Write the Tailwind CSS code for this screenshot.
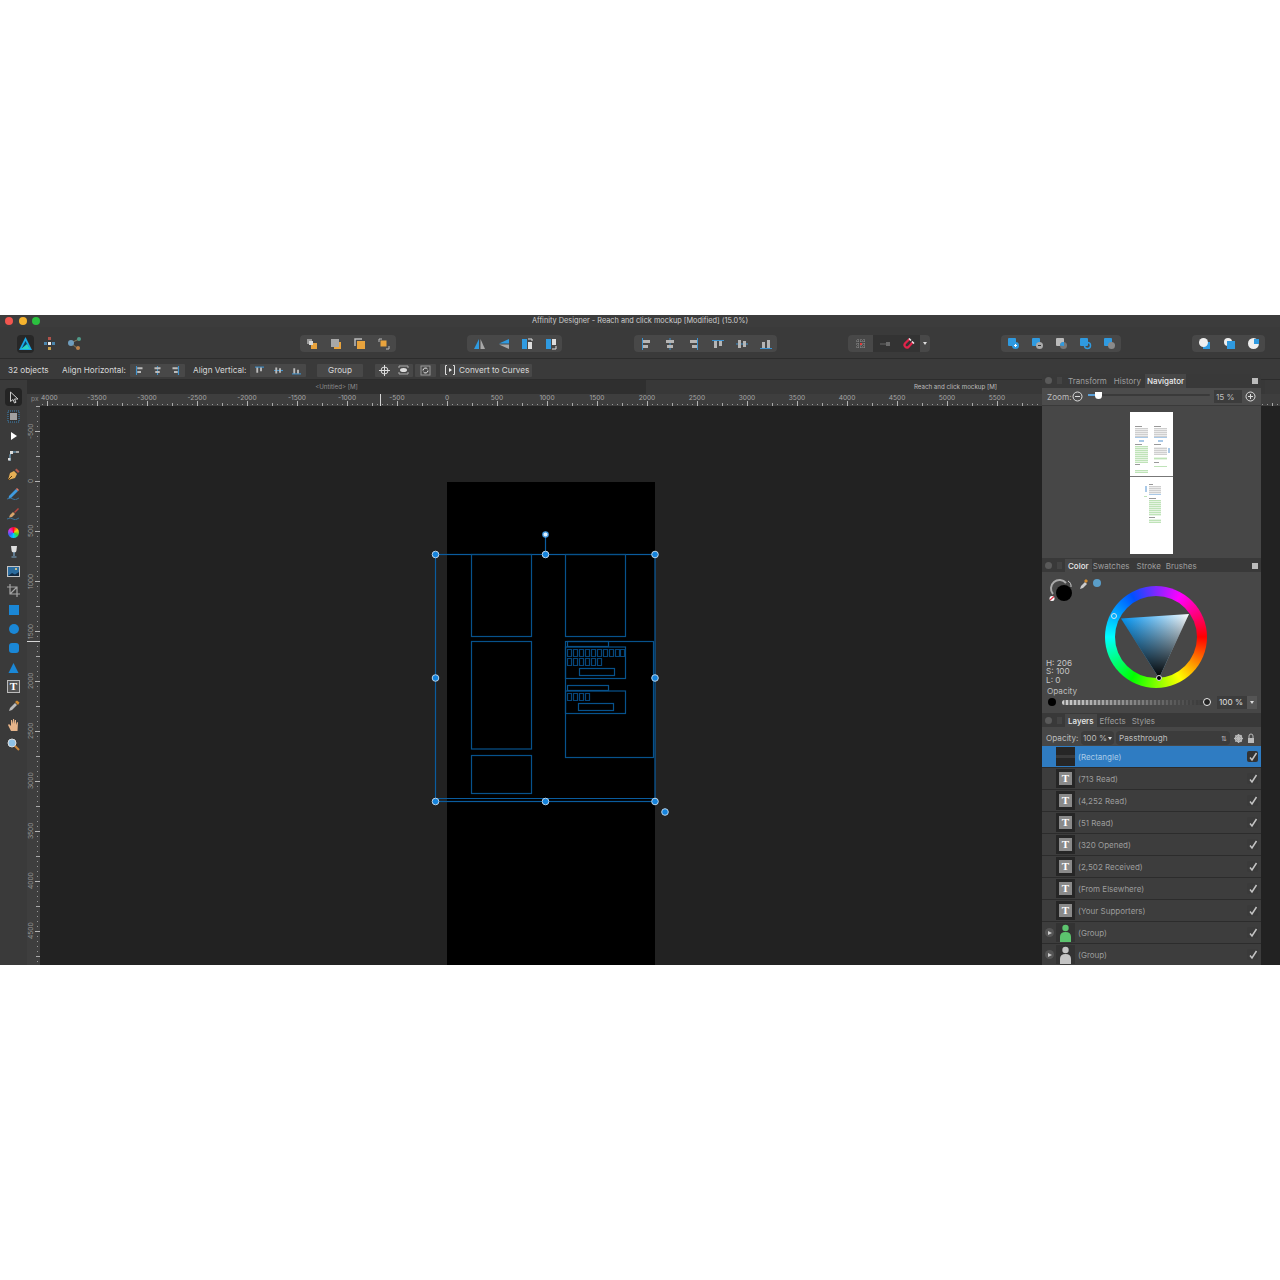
<!DOCTYPE html>
<html lang="en">
<head>
    <meta charset="UTF-8">
    <title>Affinity Designer</title>
    <script src="https://cdn.jsdelivr.net/npm/@tailwindcss/browser@4"></script>
</head>
<body class="bg-white font-['Inter',sans-serif]">
<div class="h-[315px]"></div>

<div class="relative h-[650px] overflow-hidden bg-[#3a3a3a] text-[8.200px] text-[#d8d8d8]">
    <!-- title bar -->
    <div class="relative h-[12px] pt-[1px] flex items-center justify-center bg-[#3c3c3c] text-[7.330px] text-[#cfcfcf]">
        <div class="absolute left-[5px] top-[2px] flex gap-[5.500px]">
            <span class="w-[8px] h-[8px] rounded-full bg-[#f2564f]"></span>
            <span class="w-[8px] h-[8px] rounded-full bg-[#f5b32e]"></span>
            <span class="w-[8px] h-[8px] rounded-full bg-[#2bc03f]"></span>
        </div>
        Affinity Designer - Reach and click mockup [Modified] (15.0%)
    </div>

    <!-- main toolbar -->
    <div class="h-[32px] flex items-center pl-[17px] pt-[2px] border-b border-[#2c2c2c]">
        <div class="w-[17px] h-[18px] flex items-center justify-center rounded-sm bg-[#272727]">
            <svg width="15" height="15" viewBox="0 0 15 15"><path d="M7.500 1 14 14H1z" fill="#19a9e8"/><path d="M7.500 5 11 12H4z" fill="#0d3f63"/><path d="M3 13 9 8l3 5z" fill="#29d3c4"/></svg>
        </div>
        <div class="w-[16px] h-[18px] ml-[7px] flex items-center justify-center">
            <svg width="13" height="13" viewBox="0 0 13 13"><rect x="5" y="0" width="3" height="3" fill="#b0524a"/><rect x="1" y="5" width="3" height="3" fill="#4b86ad"/><rect x="5" y="5" width="3" height="3" fill="#eee"/><rect x="9" y="5" width="3" height="3" fill="#4b86ad"/><rect x="5" y="10" width="3" height="3" fill="#c9a24a"/></svg>
        </div>
        <div class="w-[16px] h-[18px] ml-[9px] flex items-center justify-center">
            <svg width="15" height="15" viewBox="0 0 15 15"><path d="M4 7 12 3M4 7l7 6" stroke="#8a7a5a" stroke-width="1"/><circle cx="4" cy="7" r="3" fill="#6f9dbd"/><circle cx="12" cy="3" r="2" fill="#4f9a8a"/><circle cx="11" cy="12" r="2" fill="#b9804a"/></svg>
        </div>

        <div class="flex h-[17px] ml-[218px] rounded-sm bg-[#484848]">
            <div class="w-[24px] flex items-center justify-center"><svg width="12" height="12" viewBox="0 0 12 12"><rect x="1" y="1" width="5" height="5" fill="#9a9a9a"/><rect x="5" y="5" width="6" height="6" fill="#e8a33d"/><rect x="3" y="3" width="4" height="4" fill="#d8d8d8"/></svg></div>
            <div class="w-[24px] flex items-center justify-center"><svg width="12" height="12" viewBox="0 0 12 12"><rect x="1" y="1" width="8" height="8" fill="#a8a8a8"/><path d="M10 4v6H4" fill="none" stroke="#e8a33d" stroke-width="2"/></svg></div>
            <div class="w-[24px] flex items-center justify-center"><svg width="12" height="12" viewBox="0 0 12 12"><path d="M1 8V1h7" fill="none" stroke="#bbb" stroke-width="1.500"/><rect x="3" y="3" width="8" height="8" fill="#e8a33d"/></svg></div>
            <div class="w-[24px] flex items-center justify-center"><svg width="12" height="12" viewBox="0 0 12 12"><rect x="2.500" y="2.500" width="6" height="6" fill="#e8a33d"/><path d="M1 4V1h3M8 11h3V8" fill="none" stroke="#bbb" stroke-width="1"/></svg></div>
        </div>

        <div class="flex h-[17px] ml-[71px] rounded-sm bg-[#484848]">
            <div class="w-[24px] flex items-center justify-center"><svg width="13" height="12" viewBox="0 0 13 12"><path d="M6 1v10H1z" fill="#2f9ae0"/><path d="M7.500 1v10H12z" fill="#a8a8a8"/></svg></div>
            <div class="w-[24px] flex items-center justify-center"><svg width="13" height="12" viewBox="0 0 13 12"><path d="M12 1v4.500H2z" fill="#2f9ae0"/><path d="M12 11V6.500H2z" fill="#a8a8a8"/></svg></div>
            <div class="w-[24px] flex items-center justify-center"><svg width="12" height="12" viewBox="0 0 12 12"><rect x="1" y="1" width="5" height="10" fill="#2f9ae0"/><rect x="7" y="4" width="4" height="7" fill="#ddd"/><path d="M7 1h4v2" fill="none" stroke="#ddd"/></svg></div>
            <div class="w-[23px] flex items-center justify-center"><svg width="12" height="12" viewBox="0 0 12 12"><rect x="1" y="1" width="5" height="10" fill="#2f9ae0"/><rect x="7" y="1" width="4" height="6" fill="#ddd"/><path d="M11 8v3H7" fill="none" stroke="#ddd"/></svg></div>
        </div>

        <div class="flex h-[17px] ml-[72px] rounded-sm bg-[#484848]">
            <div class="w-[24px] flex items-center justify-center"><svg width="12" height="12" viewBox="0 0 12 12"><path d="M2.500 0v12" stroke="#3d92cf"/><rect x="3" y="2" width="7" height="3" fill="#b5b5b5"/><rect x="3" y="7" width="5" height="3" fill="#b5b5b5"/></svg></div>
            <div class="w-[24px] flex items-center justify-center"><svg width="12" height="12" viewBox="0 0 12 12"><path d="M6 0v12" stroke="#3d92cf"/><rect x="2" y="2" width="8" height="3" fill="#b5b5b5"/><rect x="3" y="7" width="6" height="3" fill="#b5b5b5"/></svg></div>
            <div class="w-[24px] flex items-center justify-center"><svg width="12" height="12" viewBox="0 0 12 12"><path d="M9.500 0v12" stroke="#3d92cf"/><rect x="2" y="2" width="7" height="3" fill="#b5b5b5"/><rect x="4" y="7" width="5" height="3" fill="#b5b5b5"/></svg></div>
            <div class="w-[24px] flex items-center justify-center"><svg width="12" height="12" viewBox="0 0 12 12"><path d="M0 2.500h12" stroke="#3d92cf"/><rect x="2" y="3" width="3" height="7" fill="#b5b5b5"/><rect x="7" y="3" width="3" height="5" fill="#b5b5b5"/></svg></div>
            <div class="w-[24px] flex items-center justify-center"><svg width="12" height="12" viewBox="0 0 12 12"><path d="M0 6h12" stroke="#3d92cf"/><rect x="2" y="2" width="3" height="8" fill="#b5b5b5"/><rect x="7" y="3" width="3" height="6" fill="#b5b5b5"/></svg></div>
            <div class="w-[23px] flex items-center justify-center"><svg width="12" height="12" viewBox="0 0 12 12"><path d="M0 10.500h12" stroke="#3d92cf"/><rect x="2" y="4" width="3" height="6" fill="#b5b5b5"/><rect x="7" y="2" width="3" height="8" fill="#b5b5b5"/></svg></div>
        </div>

        <div class="flex h-[17px] ml-[71px] rounded-sm bg-[#484848]">
            <div class="w-[25px] flex items-center justify-center"><svg width="12" height="12" viewBox="0 0 12 12"><path d="M3 1v10M6 1v10M9 1v10M1 3h10M1 6h10M1 9h10" stroke="#8f8f8f" stroke-dasharray="1 1"/><rect x="5" y="5" width="2" height="2" fill="#e03a3a"/></svg></div>
            <div class="w-[23px] flex items-center justify-center bg-[#333]"><svg width="12" height="8" viewBox="0 0 12 8"><path d="M1 4h6" stroke="#6a6a6a"/><rect x="7" y="2" width="4" height="4" fill="#6a6a6a"/></svg></div>
            <div class="w-[24px] flex items-center justify-center bg-[#333]"><svg width="13" height="13" viewBox="0 0 13 13"><path d="M11 5 6.500 10A2.500 2.500 0 0 1 3 6.500L7.500 2" fill="none" stroke="#e0244a" stroke-width="2.200"/><path d="M7 1.500l2 2M10 4.500l2 2" stroke="#eee" stroke-width="1.500"/></svg></div>
            <div class="w-[10px] flex items-center justify-center"><span class="w-0 h-0 border-x-[2.500px] border-x-transparent border-t-[3px] border-t-[#ddd]"></span></div>
        </div>

        <div class="flex h-[17px] ml-[71px] rounded-sm bg-[#484848]">
            <div class="w-[24px] flex items-center justify-center"><svg width="13" height="13" viewBox="0 0 13 13"><rect x="1" y="1" width="8" height="8" rx="1" fill="#2f9ae0"/><circle cx="8.500" cy="8.500" r="3.500" fill="#2f9ae0"/><path d="M7 8.500h3M8.500 7v3" stroke="#fff"/></svg></div>
            <div class="w-[24px] flex items-center justify-center"><svg width="13" height="13" viewBox="0 0 13 13"><rect x="1" y="1" width="8" height="8" rx="1" fill="#2f9ae0"/><circle cx="8.500" cy="8.500" r="3.500" fill="#aaa"/><path d="M7 8.500h3" stroke="#333"/></svg></div>
            <div class="w-[24px] flex items-center justify-center"><svg width="13" height="13" viewBox="0 0 13 13"><rect x="1" y="1" width="8" height="8" rx="1" fill="#bbb"/><circle cx="8.500" cy="8.500" r="3.500" fill="#777"/><path d="M5 8.500A3.500 3.500 0 0 1 9 5v4z" fill="#2f9ae0"/></svg></div>
            <div class="w-[24px] flex items-center justify-center"><svg width="13" height="13" viewBox="0 0 13 13"><rect x="1" y="1" width="8" height="8" rx="1" fill="#2f9ae0"/><circle cx="8.500" cy="8.500" r="3" fill="none" stroke="#2f9ae0" stroke-width="1.500"/></svg></div>
            <div class="w-[24px] flex items-center justify-center"><svg width="13" height="13" viewBox="0 0 13 13"><rect x="1" y="1" width="8" height="8" rx="1" fill="#2f9ae0"/><circle cx="8.500" cy="8.500" r="3.500" fill="#8a8a8a"/></svg></div>
        </div>

        <div class="flex h-[17px] ml-[71px] rounded-sm bg-[#484848]">
            <div class="w-[25px] flex items-center justify-center"><svg width="13" height="13" viewBox="0 0 13 13"><rect x="5" y="5" width="7" height="7" fill="#2f9ae0"/><circle cx="5.500" cy="5.500" r="4.500" fill="#eee"/></svg></div>
            <div class="w-[24px] flex items-center justify-center"><svg width="13" height="13" viewBox="0 0 13 13"><circle cx="5" cy="5" r="4" fill="#eee"/><rect x="4" y="4" width="8" height="8" fill="#2f9ae0"/></svg></div>
            <div class="w-[24px] flex items-center justify-center"><svg width="13" height="13" viewBox="0 0 13 13"><circle cx="6.500" cy="6.500" r="5.500" fill="#eee"/><path d="M7 2h5v5H7z" fill="#2f9ae0"/></svg></div>
        </div>
    </div>

    <!-- context bar -->
    <div class="h-[20px] flex items-center pl-[8px] pt-[2px] text-[8.200px] whitespace-nowrap">
        <span class="w-[54px]">32 objects</span>
        <span class="w-[68px]">Align Horizontal:</span>
        <div class="flex w-[55px] h-[13px] rounded-[1px] bg-[#484848]">
            <div class="flex-1 flex items-center justify-center"><svg width="9" height="9" viewBox="0 0 12 12"><path d="M2 0v12" stroke="#3d92cf" stroke-width="1.500"/><path d="M3 3h7M3 8h5" stroke="#bbb" stroke-width="2.500"/></svg></div>
            <div class="flex-1 flex items-center justify-center"><svg width="9" height="9" viewBox="0 0 12 12"><path d="M6 0v12" stroke="#3d92cf" stroke-width="1.500"/><path d="M2 3h8M3 8h6" stroke="#bbb" stroke-width="2.500"/></svg></div>
            <div class="flex-1 flex items-center justify-center"><svg width="9" height="9" viewBox="0 0 12 12"><path d="M10 0v12" stroke="#3d92cf" stroke-width="1.500"/><path d="M2 3h7M4 8h5" stroke="#bbb" stroke-width="2.500"/></svg></div>
        </div>
        <span class="w-[57px] ml-[8px]">Align Vertical:</span>
        <div class="flex w-[56px] h-[13px] rounded-[1px] bg-[#484848]">
            <div class="flex-1 flex items-center justify-center"><svg width="9" height="9" viewBox="0 0 12 12"><path d="M0 1.500h12" stroke="#3d92cf" stroke-width="1.500"/><path d="M3 2v7M8 2v5" stroke="#bbb" stroke-width="2.500"/></svg></div>
            <div class="flex-1 flex items-center justify-center"><svg width="9" height="9" viewBox="0 0 12 12"><path d="M0 6h12" stroke="#3d92cf" stroke-width="1.500"/><path d="M3 2v8M8 3v6" stroke="#bbb" stroke-width="2.500"/></svg></div>
            <div class="flex-1 flex items-center justify-center"><svg width="9" height="9" viewBox="0 0 12 12"><path d="M0 10.500h12" stroke="#3d92cf" stroke-width="1.500"/><path d="M3 3v7M8 5v5" stroke="#bbb" stroke-width="2.500"/></svg></div>
        </div>
        <div class="w-[46px] h-[13px] ml-[11px] flex items-center justify-center rounded-[1px] bg-[#484848]">Group</div>
        <div class="flex w-[38px] h-[13px] ml-[12px] rounded-[1px] bg-[#484848]">
            <div class="flex-1 flex items-center justify-center"><svg width="11" height="11" viewBox="0 0 11 11"><circle cx="5.500" cy="5.500" r="3.500" fill="none" stroke="#ddd"/><path d="M5.500 0v11M0 5.500h11" stroke="#ddd"/></svg></div>
            <div class="flex-1 flex items-center justify-center"><svg width="11" height="10" viewBox="0 0 11 10"><path d="M1 3V1h9v2M1 7v2h9V7" fill="none" stroke="#aaa"/><ellipse cx="5.500" cy="5" rx="3.500" ry="2" fill="#ddd"/></svg></div>
        </div>
        <div class="w-[21px] h-[13px] ml-[2px] flex items-center justify-center rounded-[1px] bg-[#484848]"><svg width="11" height="11" viewBox="0 0 11 11"><rect x="1" y="1" width="9" height="9" fill="none" stroke="#999"/><path d="M3 5.500A2.500 2.500 0 0 1 7.500 4M8 5.500A2.500 2.500 0 0 1 3.500 7" fill="none" stroke="#eee"/></svg></div>
        <div class="w-[92px] h-[13px] ml-[4px] flex items-center gap-[4px] pl-[5px] rounded-[1px] bg-[#484848]">
            <svg width="10" height="10" viewBox="0 0 10 10"><path d="M2 .5H.500v9H2M8 .5h1.500v9H8" fill="none" stroke="#ddd"/><path d="M4 3l3 2-3 2z" fill="#eee"/></svg>
            Convert to Curves
        </div>
    </div>

    <div class="flex h-[586px] border-t border-[#2c2c2c]">
        <!-- tools -->
        <div class="w-[27px] pt-[8px] flex flex-col items-center">
            <div class="w-[17px] h-[18px] mb-[1px] flex items-center justify-center rounded-sm bg-[#242424]"><svg width="12" height="13" viewBox="0 0 12 13"><path d="M2.500 1v9.500l2.500-2 1.500 3.500 1.500-.7L6.500 8H10z" fill="none" stroke="#ccc"/></svg></div>
            <div class="h-[19.300px] flex items-center"><svg width="13" height="13" viewBox="0 0 13 13"><rect x="1" y="1" width="11" height="11" fill="#333" stroke="#3f86ba" stroke-dasharray="1 1"/><rect x="3" y="3" width="7" height="7" fill="#a0a0a0"/></svg></div>
            <div class="h-[19.300px] flex items-center"><svg width="10" height="10" viewBox="0 0 10 10"><path d="M2 1v8l6-4z" fill="#fff"/></svg></div>
            <div class="h-[19.300px] flex items-center"><svg width="13" height="13" viewBox="0 0 13 13"><path d="M3 12V6Q3 3 6 3h6" fill="none" stroke="#7ab8e0"/><rect x="1" y="9" width="2.500" height="2.500" fill="#ddd"/><rect x="3" y="2" width="3" height="3" fill="#ddd"/><path d="M9 2h3v2H9z" fill="#aaa"/></svg></div>
            <div class="h-[19.300px] flex items-center"><svg width="13" height="13" viewBox="0 0 13 13"><path d="M1 12l2-7 4-2 3 3-2 4z" fill="#e6ae55"/><path d="M1 12l4-4" stroke="#5a3a10"/><path d="M8 2l3 3 1.500-1.500-3-3z" fill="#b55a4a"/></svg></div>
            <div class="h-[19.300px] flex items-center"><svg width="13" height="13" viewBox="0 0 13 13"><path d="M2 9 9 2l2 2-7 7-2.500.5z" fill="#3f9be0"/><path d="M9 2l1-1 2 2-1 1z" fill="#e67a6a"/><path d="M0 12q4-2 6 0t6-1" fill="none" stroke="#3f80b0" stroke-width=".8"/></svg></div>
            <div class="h-[19.300px] flex items-center"><svg width="13" height="13" viewBox="0 0 13 13"><path d="M7 5l4-4 1 1-4 4z" fill="#b8453e"/><path d="M3 8l3-3 2 2-3 3-3 .5z" fill="#d9a36a"/><path d="M0 12q4-2 6 0t6-1" fill="none" stroke="#3f80b0" stroke-width=".8"/></svg></div>
            <div class="h-[19.300px] flex items-center"><span class="w-[11px] h-[11px] rounded-full bg-[conic-gradient(#f03,#fc0,#3d3,#0cf,#36f,#d3d,#f03)]"></span></div>
            <div class="h-[19.300px] flex items-center"><svg width="10" height="13" viewBox="0 0 10 13"><path d="M2 1h6l-.5 4a2.500 2.500 0 0 1-5 0z" fill="#e0e0e0"/><path d="M5 7v4M2.500 12h5" stroke="#7aa6c8" stroke-width="1.200"/></svg></div>
            <div class="h-[19.300px] flex items-center"><svg width="13" height="11" viewBox="0 0 13 11"><rect width="13" height="11" fill="#c4c4c4"/><rect x="1" y="1" width="11" height="9" fill="#2b6c9f"/><path d="M1 10l4-3 3 1.500L12 6v4z" fill="#122b44"/><circle cx="9" cy="3" r="1" fill="#f3d98a"/></svg></div>
            <div class="h-[19.300px] flex items-center"><svg width="13" height="13" viewBox="0 0 13 13"><path d="M3 0v10h10M0 3h10v10M3 10 10 3" fill="none" stroke="#a5a5a5" stroke-width="1.200"/></svg></div>
            <div class="h-[19.300px] flex items-center"><span class="w-[10px] h-[10px] bg-[#1a87d6]"></span></div>
            <div class="h-[19.300px] flex items-center"><span class="w-[10px] h-[10px] rounded-full bg-[#1a87d6]"></span></div>
            <div class="h-[19.300px] flex items-center"><span class="w-[10px] h-[10px] rounded-[3px] bg-[#1a87d6]"></span></div>
            <div class="h-[19.300px] flex items-center"><svg width="11" height="10" viewBox="0 0 11 10"><path d="M5.500 0 10.500 10H.500z" fill="#1a87d6"/></svg></div>
            <div class="h-[19.300px] flex items-center"><span class="w-[13px] h-[13px] flex items-center justify-center border border-[#bbb] bg-[#555] font-['Liberation_Serif',serif] font-bold text-[11px] leading-none text-white">T</span></div>
            <div class="h-[19.300px] flex items-center"><svg width="12" height="12" viewBox="0 0 12 12"><path d="M1 11l1-3 5-5 2 2-5 5z" fill="#bbb"/><path d="M7 2l2-1.500 2.500 2L10 5z" fill="#d08a30"/></svg></div>
            <div class="h-[19.300px] flex items-center"><svg width="13" height="14" viewBox="0 0 13 14"><path d="M4 13 1 7l1-1 2 2V2l1 0 1 4V1h1l1 5V2h1v5l1-3 1 .5L10.500 13z" fill="#e6b48a"/></svg></div>
            <div class="h-[19.300px] flex items-center"><svg width="13" height="13" viewBox="0 0 13 13"><circle cx="5" cy="5" r="4" fill="#8fc2e6" stroke="#ddd"/><path d="M8 8l4 4" stroke="#c9853a" stroke-width="2"/></svg></div>
        </div>

        <div class="flex-1 min-w-0">
            <!-- document tabs -->
            <div class="flex h-[14px] text-[6.200px] text-[#8e8e8e]">
                <div class="w-[619px] flex items-center justify-center bg-[#2f2f2f]">&lt;Untitled&gt; [M]</div>
                <div class="w-[619px] flex items-center justify-center bg-[#383838] text-[#bdbdbd]">Reach and click mockup [M]</div>
            </div>
            <!-- horizontal ruler -->
            <div id="hruler" class="relative flex h-[12px] bg-[#3e3e3e] text-[6.600px] leading-[9px] text-[#a5a5a5] whitespace-nowrap">
                <span class="w-[12px] pl-[4px] pt-[1px] text-[#8a8a8a]">px</span>
                <span class="w-[33px] pl-[2px]">4000</span>
                <span class="w-[50px] shrink-0 text-center">-3500</span>
                <span class="w-[50px] shrink-0 text-center">-3000</span>
                <span class="w-[50px] shrink-0 text-center">-2500</span>
                <span class="w-[50px] shrink-0 text-center">-2000</span>
                <span class="w-[50px] shrink-0 text-center">-1500</span>
                <span class="w-[50px] shrink-0 text-center">-1000</span>
                <span class="w-[50px] shrink-0 text-center">-500</span>
                <span class="w-[50px] shrink-0 text-center">0</span>
                <span class="w-[50px] shrink-0 text-center">500</span>
                <span class="w-[50px] shrink-0 text-center">1000</span>
                <span class="w-[50px] shrink-0 text-center">1500</span>
                <span class="w-[50px] shrink-0 text-center">2000</span>
                <span class="w-[50px] shrink-0 text-center">2500</span>
                <span class="w-[50px] shrink-0 text-center">3000</span>
                <span class="w-[50px] shrink-0 text-center">3500</span>
                <span class="w-[50px] shrink-0 text-center">4000</span>
                <span class="w-[50px] shrink-0 text-center">4500</span>
                <span class="w-[50px] shrink-0 text-center">5000</span>
                <span class="w-[50px] shrink-0 text-center">5500</span>
                <svg class="absolute inset-0" width="1253" height="12" viewBox="27 394 1253 12">
                    <defs><pattern id="ht" x="447" y="394" width="50" height="12" patternUnits="userSpaceOnUse">
                        <rect x="0" y="7" width="1" height="5" fill="#b5b5b5"/>
                        <rect x="5" y="10" width="1" height="1" fill="#999"/><rect x="10" y="10" width="1" height="1" fill="#999"/><rect x="15" y="10" width="1" height="1" fill="#999"/><rect x="20" y="10" width="1" height="1" fill="#999"/>
                        <rect x="25" y="9" width="1" height="3" fill="#aaa"/>
                        <rect x="30" y="10" width="1" height="1" fill="#999"/><rect x="35" y="10" width="1" height="1" fill="#999"/><rect x="40" y="10" width="1" height="1" fill="#999"/><rect x="45" y="10" width="1" height="1" fill="#999"/>
                    </pattern></defs>
                    <rect x="40" y="394" width="1240" height="12" fill="url(#ht)"/>
                    <rect x="380" y="394" width="1" height="12" fill="#d5d5d5"/>
                </svg>
            </div>

            <div class="flex h-[559px]">
                <!-- vertical ruler -->
                <div class="relative w-[13px] bg-[#3e3e3e] text-[6.600px] leading-[9px] text-[#9a9a9a] overflow-hidden">
                    <div class="h-[50px] flex items-center justify-center [writing-mode:vertical-rl] rotate-180 pl-[4px]">-500</div>
                    <div class="h-[50px] flex items-center justify-center [writing-mode:vertical-rl] rotate-180 pl-[4px]">0</div>
                    <div class="h-[50px] flex items-center justify-center [writing-mode:vertical-rl] rotate-180 pl-[4px]">500</div>
                    <div class="h-[50px] flex items-center justify-center [writing-mode:vertical-rl] rotate-180 pl-[4px]">1000</div>
                    <div class="h-[50px] flex items-center justify-center [writing-mode:vertical-rl] rotate-180 pl-[4px]">1500</div>
                    <div class="h-[50px] flex items-center justify-center [writing-mode:vertical-rl] rotate-180 pl-[4px]">2000</div>
                    <div class="h-[50px] flex items-center justify-center [writing-mode:vertical-rl] rotate-180 pl-[4px]">2500</div>
                    <div class="h-[50px] flex items-center justify-center [writing-mode:vertical-rl] rotate-180 pl-[4px]">3000</div>
                    <div class="h-[50px] flex items-center justify-center [writing-mode:vertical-rl] rotate-180 pl-[4px]">3500</div>
                    <div class="h-[50px] flex items-center justify-center [writing-mode:vertical-rl] rotate-180 pl-[4px]">4000</div>
                    <div class="h-[50px] flex items-center justify-center [writing-mode:vertical-rl] rotate-180 pl-[4px]">4500</div>
                    <svg class="absolute inset-0" width="13" height="559" viewBox="27 406 13 559">
                        <defs><pattern id="vt" x="27" y="431" width="13" height="50" patternUnits="userSpaceOnUse">
                            <rect x="8" y="0" width="5" height="1" fill="#b5b5b5"/>
                            <rect x="10" y="5" width="1" height="1" fill="#999"/><rect x="10" y="10" width="1" height="1" fill="#999"/><rect x="10" y="15" width="1" height="1" fill="#999"/><rect x="10" y="20" width="1" height="1" fill="#999"/>
                            <rect x="9" y="25" width="4" height="1" fill="#aaa"/>
                            <rect x="10" y="30" width="1" height="1" fill="#999"/><rect x="10" y="35" width="1" height="1" fill="#999"/><rect x="10" y="40" width="1" height="1" fill="#999"/><rect x="10" y="45" width="1" height="1" fill="#999"/>
                        </pattern></defs>
                        <rect x="27" y="406" width="13" height="559" fill="url(#vt)"/>
                        <rect x="27" y="641" width="13" height="1" fill="#d5d5d5"/>
                    </svg>
                </div>

                <!-- canvas -->
                <div class="relative flex-1 bg-[#222222]">
                    <div class="absolute left-[407px] top-[76px] w-[208px] h-[483px] bg-black"></div>
                    <svg class="absolute inset-0" width="1240" height="559" viewBox="40 406 1240 559" fill="none" stroke="#0a5c9e" stroke-width="1.200">
                        <rect x="435.500" y="554.500" width="219.500" height="247"/>
                        <path d="M435.500 798.500H655"/>
                        <path d="M545.500 535V554"/>
                        <g stroke="#07528c">
                            <rect x="471.500" y="554.500" width="60" height="82"/>
                            <rect x="565.500" y="554.500" width="60" height="82"/>
                            <rect x="471.500" y="641.500" width="60" height="107.500"/>
                            <rect x="471.500" y="755.500" width="60" height="38"/>
                            <rect x="565.500" y="641.500" width="88" height="116"/>
                            <rect x="567.500" y="641.500" width="41" height="5"/>
                            <rect x="565.500" y="647" width="60" height="31.500"/>
                            <rect x="579.500" y="668.500" width="35" height="7"/>
                            <rect x="567.500" y="685.500" width="41" height="5"/>
                            <rect x="565.500" y="691" width="60" height="22.500"/>
                            <rect x="578.500" y="703.500" width="35" height="7"/>
                        </g>
                        <g stroke="#06467a">
                            <path d="M567.500 649.500h4v7h-4zM573.500 649.500h4v7h-4zM579.500 649.500h4v7h-4zM585.500 649.500h4v7h-4zM591.500 649.500h4v7h-4zM597.500 649.500h4v7h-4zM603.500 649.500h4v7h-4zM609.500 649.500h4v7h-4zM615.500 649.500h4v7h-4zM620.500 649.500h4v7h-4z"/>
                            <path d="M567.500 658.500h4v7h-4zM573.500 658.500h4v7h-4zM579.500 658.500h4v7h-4zM585.500 658.500h4v7h-4zM591.500 658.500h4v7h-4zM597.500 658.500h4v7h-4z"/>
                            <path d="M567.500 693.500h4v7h-4zM573.500 693.500h4v7h-4zM579.500 693.500h4v7h-4zM585.500 693.500h4v7h-4z"/>
                        </g>
                        <g fill="#1583dc" stroke="#b9d4ea" stroke-width="1">
                            <circle cx="545.500" cy="554.500" r="3.300"/><circle cx="435.500" cy="554.500" r="3.300"/><circle cx="655" cy="554.500" r="3.300"/>
                            <circle cx="435.500" cy="678" r="3.300"/><circle cx="655" cy="678" r="3.300"/>
                            <circle cx="435.500" cy="801.500" r="3.300"/><circle cx="545.500" cy="801.500" r="3.300"/><circle cx="655" cy="801.500" r="3.300"/>
                            <circle cx="665" cy="812" r="3.300"/>
                        </g>
                        <circle cx="545.500" cy="534.500" r="2.700" fill="#dff0ff" stroke="#3a94dc"/>
                    </svg>
                </div>
            </div>
        </div>
    </div>

    <!-- floating studio panels -->
    <div class="absolute left-[1042px] top-[59px] w-[219px] h-[591px] flex flex-col bg-[#474747] text-[8.200px] text-[#bdbdbd]">
        <!-- navigator -->
        <div class="shrink-0 flex items-center h-[13.500px] bg-[#393939] text-[8px] text-[#9e9e9e] whitespace-nowrap">
            <span class="w-[7px] h-[7px] ml-[3px] rounded-full bg-[#5a5a5a]"></span>
            <span class="w-[5px] h-[7px] ml-[5px] mr-[3px] bg-[#444]"></span>
            <span class="px-[3px]">Transform</span>
            <span class="ml-[4px]">History</span>
            <span class="h-full ml-[4px] px-[2px] flex items-center bg-[#474747] text-[#eaeaea] font-medium">Navigator</span>
            <span class="ml-auto mr-[3px] w-[6px] h-[6px] bg-[#bbb]"></span>
        </div>
        <div class="shrink-0 flex items-center h-[18.500px] pl-[5px] pt-[1px] border-b border-[#3a3a3a] bg-[#4c4c4c]">
            <span class="w-[24px]">Zoom:</span>
            <svg class="ml-[1px]" width="11" height="11" viewBox="0 0 11 11"><circle cx="5.500" cy="5.500" r="4.500" fill="none" stroke="#ddd"/><path d="M3 5.500h5" stroke="#ddd"/></svg>
            <div class="relative w-[122px] h-[2px] ml-[5px] -mt-[3px] rounded-full bg-[#3a3a3a]">
                <div class="w-[10px] h-[2px] bg-[#5b9fd6]"></div>
                <span class="absolute left-[7px] -top-[2px] w-[7px] h-[7px] rounded-b-full bg-white"></span>
            </div>
            <span class="w-[28px] h-[13px] ml-[4px] pl-[2px] flex items-center bg-[#3c3c3c]">15 %</span>
            <svg class="ml-[3px]" width="11" height="11" viewBox="0 0 11 11"><circle cx="5.500" cy="5.500" r="4.500" fill="none" stroke="#ddd"/><path d="M3 5.500h5M5.500 3v5" stroke="#ddd"/></svg>
        </div>
        <div class="shrink-0 h-[152px] flex justify-center pt-[5.500px]">
            <svg width="43" height="142" viewBox="0 0 43 142">
                <defs>
                    <pattern id="greenlines" width="4" height="2" patternUnits="userSpaceOnUse"><rect width="4" height="1" fill="#bfe3b8"/><rect y="1" width="4" height="1" fill="#e6f4e3"/></pattern>
                    <pattern id="greylines" width="4" height="2" patternUnits="userSpaceOnUse"><rect width="4" height="1" fill="#cfcfcf"/><rect y="1" width="4" height="1" fill="#ececec"/></pattern>
                </defs>
                <rect width="43" height="64" fill="#fff"/><rect y="65" width="43" height="77" fill="#fff"/><rect y="64" width="43" height="1" fill="#777"/>
                <g fill="url(#greylines)"><rect x="5" y="16" width="13" height="9"/><rect x="24" y="16" width="13" height="9"/><rect x="24" y="35" width="13" height="8"/><rect x="19" y="74" width="12" height="8"/></g>
                <g fill="url(#greenlines)"><rect x="5" y="34" width="13" height="17"/><rect x="5" y="58" width="13" height="3"/><rect x="24" y="45" width="13" height="3"/><rect x="24" y="54" width="13" height="1"/><rect x="19" y="88" width="12" height="16"/><rect x="19" y="107" width="12" height="4"/><rect x="14" y="84" width="3" height="1"/></g>
                <g fill="#a9c9e8"><rect x="5" y="25" width="13" height="1"/><rect x="24" y="25" width="13" height="1"/><rect x="19" y="82" width="12" height="1"/><rect x="9" y="28" width="5" height="2"/><rect x="28" y="28" width="5" height="2"/><rect x="38" y="36" width="2" height="5"/><rect x="15" y="74" width="2" height="6"/></g>
                <g fill="#999"><rect x="5" y="32" width="7" height="1"/><rect x="24" y="32" width="7" height="1"/><rect x="5" y="14" width="7" height="1"/><rect x="24" y="14" width="7" height="1"/><rect x="5" y="52" width="5" height="1"/><rect x="24" y="50" width="5" height="1"/><rect x="19" y="86" width="7" height="1"/><rect x="19" y="105" width="6" height="1"/><rect x="19" y="72" width="4" height="1"/></g>
            </svg>
        </div>

        <!-- color -->
        <div class="shrink-0 flex items-center h-[14px] pt-[1px] bg-[#393939] text-[8px] text-[#9e9e9e] whitespace-nowrap">
            <span class="w-[7px] h-[7px] ml-[3px] rounded-full bg-[#5a5a5a]"></span>
            <span class="w-[5px] h-[7px] ml-[5px] mr-[3px] bg-[#444]"></span>
            <span class="h-full px-[3px] flex items-center bg-[#474747] text-[#eaeaea] font-medium">Color</span>
            <span class="ml-[1px]">Swatches</span>
            <span class="ml-[7px]">Stroke</span>
            <span class="ml-[5px]">Brushes</span>
            <span class="ml-auto mr-[3px] w-[6px] h-[6px] bg-[#bbb]"></span>
        </div>
        <div class="shrink-0 h-[141px]">
            <div class="flex h-[115px]">
                <div class="w-[63px] pl-[4px] pt-[6px] flex flex-col">
                    <svg width="56" height="27" viewBox="0 0 56 27">
                        <path d="M7 16A8 8 0 0 1 20 5" fill="none" stroke="#aaa" stroke-width="2"/>
                        <path d="M22 3a6 6 0 0 1 3 6" fill="none" stroke="#ccc"/>
                        <circle cx="18" cy="15" r="8" fill="#000"/>
                        <circle cx="6" cy="20.500" r="2.500" fill="#fff"/><path d="M4 22l4-3.500" stroke="#e0334a" stroke-width="1.200"/>
                        <path d="M34 11l1-3 4-4 2 2-4 4z" fill="#ccc"/><path d="M38 3l2-2 2 2-2 2z" fill="#d08a30"/>
                        <circle cx="51" cy="5" r="4" fill="#5a9ec9"/>
                    </svg>
                    <div class="mt-auto pb-[3px] leading-[8.500px] text-[#c8c8c8]">H: 206<br>S: 100<br>L: 0</div>
                </div>
                <div class="relative w-[102px] h-[102px] mt-[14px] rounded-full bg-[conic-gradient(from_90deg,#ff0000,#ffff00,#00ff00,#00ffff,#0050ff,#ff00ff,#ff0000)]">
                    <div class="absolute inset-[10px] rounded-full bg-[#474747]"></div>
                    <svg class="absolute inset-0" width="102" height="102" viewBox="0 0 102 102">
                        <defs>
                            <linearGradient id="hue" x1="0" y1="0" x2="1" y2="0"><stop offset="0" stop-color="#009bff"/><stop offset="1" stop-color="#ffffff"/></linearGradient>
                            <linearGradient id="blk" x1="0" y1="0" x2="0" y2="1"><stop offset="0" stop-color="#000" stop-opacity="0"/><stop offset="1" stop-color="#000"/></linearGradient>
                        </defs>
                        <path d="M16 32.500 84 28 54 92z" fill="url(#hue)"/>
                        <path d="M16 32.500 84 28 54 92z" fill="url(#blk)"/>
                        <circle cx="54" cy="92" r="2.500" fill="#000" stroke="#ddd"/>
                        <circle cx="9" cy="30" r="2.500" fill="none" stroke="#cfe6f7"/>
                    </svg>
                </div>
            </div>
            <div class="pl-[5px] h-[9px] leading-[9px]">Opacity</div>
            <div class="flex items-center h-[12px] pl-[6px]">
                <span class="w-[8px] h-[8px] rounded-full bg-black"></span>
                <div class="relative w-[144px] h-[5px] ml-[6px] rounded-full bg-[repeating-linear-gradient(90deg,#cfcfcf_0_2px,#7e7e7e_2px_4px)]">
                    <div class="h-full rounded-full bg-gradient-to-r from-transparent to-[#3a3a3a]"></div>
                    <span class="absolute -right-[5px] -top-[1.500px] w-[8px] h-[8px] rounded-full bg-[#222] border border-[#eee]"></span>
                </div>
                <div class="flex items-center w-[40px] h-[13px] ml-[11px] bg-[#3c3c3c] text-[#e0e0e0]">
                    <span class="pl-[2px] flex-1">100 %</span>
                    <span class="w-[10px] h-full flex items-center justify-center bg-[#555]"><span class="w-0 h-0 border-x-[2px] border-x-transparent border-t-[3px] border-t-[#ddd]"></span></span>
                </div>
            </div>
        </div>

        <!-- layers -->
        <div class="shrink-0 flex items-center h-[14px] pt-[1px] bg-[#393939] text-[8px] text-[#9e9e9e] whitespace-nowrap">
            <span class="w-[7px] h-[7px] ml-[3px] rounded-full bg-[#5a5a5a]"></span>
            <span class="w-[5px] h-[7px] ml-[5px] mr-[3px] bg-[#444]"></span>
            <span class="h-full px-[3px] flex items-center bg-[#474747] text-[#eaeaea] font-medium">Layers</span>
            <span class="ml-[3px]">Effects</span>
            <span class="ml-[6px]">Styles</span>
        </div>
        <div class="shrink-0 flex items-center h-[19px] pl-[4px] pt-[3px]">
            <span class="w-[35px]">Opacity:</span>
            <span class="w-[33px] h-[14px] flex items-center justify-between px-[2px] rounded-sm bg-[#3c3c3c]">100 %<span class="w-0 h-0 border-x-[2px] border-x-transparent border-t-[3px] border-t-[#ddd]"></span></span>
            <span class="w-[114px] h-[14px] ml-[2px] flex items-center justify-between px-[3px] rounded-sm bg-[#3c3c3c]">Passthrough<span class="text-[7px] leading-none">⇅</span></span>
            <svg class="ml-[4px]" width="9" height="9" viewBox="0 0 9 9"><circle cx="4.500" cy="4.500" r="3" fill="none" stroke="#bbb" stroke-width="1.800"/><path d="M4.500 0v9M0 4.500h9M1.300 1.300l6.400 6.400M7.700 1.300 1.300 7.700" stroke="#bbb"/></svg>
            <svg class="ml-[4px]" width="8" height="10" viewBox="0 0 8 10"><path d="M2 5V3a2 2 0 0 1 4 0v2" fill="none" stroke="#bbb"/><rect x="1" y="5" width="6" height="5" fill="#bbb"/></svg>
        </div>
        <div id="layers" class="shrink-0"></div>
    </div>
</div>

<script>
    const layers = [
        ['(Rectangle)', 'rect'],
        ['(713 Read)', 'text'],
        ['(4,252 Read)', 'text'],
        ['(51 Read)', 'text'],
        ['(320 Opened)', 'text'],
        ['(2,502 Received)', 'text'],
        ['(From Elsewhere)', 'text'],
        ['(Your Supporters)', 'text'],
        ['(Group)', 'green'],
        ['(Group)', 'grey']
    ];
    const check = '<svg width="10" height="10" viewBox="0 0 10 10"><path d="M2 5.500 4 8 8.500 1" fill="none" stroke="#c4c4c4" stroke-width="1.500"/></svg>';
    function person(colour) {
        return `<svg width="19" height="20" viewBox="0 0 19 20"><circle cx="9.500" cy="5" r="3.200" fill="${colour}"/><path d="M4 20v-6q0-5 5.500-5T15 14v6z" fill="${colour}"/></svg>`;
    }
    document.getElementById('layers').innerHTML = layers.map(function (l, i) {
        const selected = i === 0;
        const thumb = l[1] === 'rect'
            ? '<span class="w-[19px] h-[19px] flex items-center bg-[#262626]"><span class="w-full h-[3px] bg-[#3a3a3a]"></span></span>'
            : l[1] === 'text'
            ? '<span class="w-[19px] h-[19px] flex items-center justify-center bg-[#262626]"><span class="w-[13px] h-[13px] flex items-center justify-center bg-[#8a8a8a] font-[\'Liberation_Serif\',serif] font-bold text-[11px] leading-none text-white">T</span></span>'
            : `<span class="w-[19px] h-[19px] bg-[#333] overflow-hidden">${person(l[1] === 'green' ? '#5cc46e' : '#c4c4c4')}</span>`;
        const arrow = (l[1] === 'green' || l[1] === 'grey')
            ? '<span class="absolute left-[3px] w-[9px] h-[9px] flex items-center justify-center rounded-full bg-[#555]"><span class="w-0 h-0 border-y-[2.500px] border-y-transparent border-l-[4px] border-l-[#ccc]"></span></span>'
            : '';
        return `<div class="relative flex items-center h-[22px] pl-[14px] pr-[3px] border-b border-[#2c2c2c] ${selected ? 'bg-[#2f7cc2] text-[#a9cbe8]' : 'bg-[#3d3d3d] text-[#9c9c9c]'}">
            ${arrow}${thumb}
            <span class="ml-[3px] text-[8px]">${l[0]}</span>
            <span class="ml-auto w-[11px] h-[11px] flex items-center justify-center rounded-[2px] ${selected ? 'bg-[#333]' : 'bg-[#3a3a3a]'}">${check}</span>
        </div>`;
    }).join('');
</script>
</body>
</html>
